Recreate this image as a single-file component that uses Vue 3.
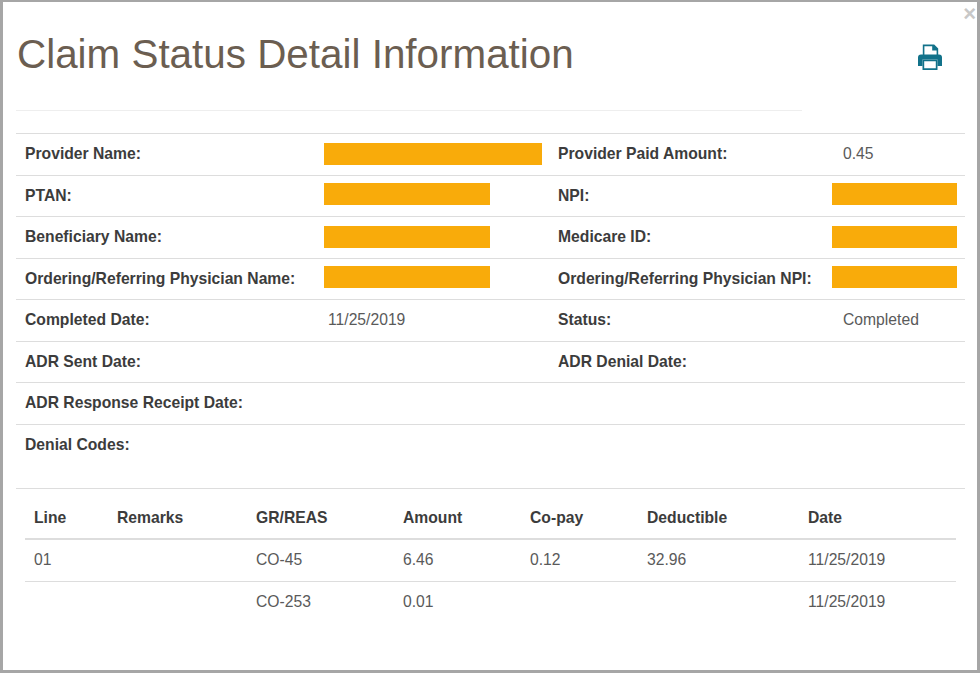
<template>
  <div class="modal">
    <span class="close">×</span>
    <div class="title-row">
      <h1 class="title">Claim Status Detail Information</h1>
      <svg class="print" viewBox="0 0 24 26" width="24" height="26">
        <path class="ink" fill-rule="evenodd" d="M4.800 11V.6h11.400l4 4V11h-1.600V6.400h-4.400V2.200H6.400V11z" />
        <path class="ink" d="M3 10.500h18a3 3 0 0 1 3 3V22h-4.500v-6.500h-15V22H0v-8.500a3 3 0 0 1 3-3z" />
        <path class="ink" fill-rule="evenodd" d="M4.500 15.500h15V26h-15zM6.200 17.200V24.300h11.600v-7.100z" />
      </svg>
    </div>
    <div class="title-rule"></div>

    <div class="info">
      <div v-for="row in rows" :key="row.label" class="info-row">
        <div class="label">{{ row.label }}</div>
        <div class="value">
          <span v-if="row.bar" class="bar" :style="{ width: row.bar + 'px' }"></span>
          <span v-else class="text">{{ row.value }}</span>
        </div>
        <div class="label">{{ row.label2 }}</div>
        <div class="value value-right">
          <span v-if="row.bar2" class="bar" :style="{ width: row.bar2 + 'px' }"></span>
          <span v-else class="text">{{ row.value2 }}</span>
        </div>
      </div>
    </div>

    <div class="lines-rule"></div>

    <table class="lines">
      <thead>
        <tr>
          <th v-for="col in columns" :key="col.name" :style="{ width: col.width + 'px' }">{{ col.name }}</th>
        </tr>
      </thead>
      <tbody>
        <tr v-for="(line, i) in lines" :key="i">
          <td v-for="(cell, j) in line" :key="j">{{ cell }}</td>
        </tr>
      </tbody>
    </table>
  </div>
</template>

<script setup>
const rows = [
  { label: 'Provider Name:', bar: 218, label2: 'Provider Paid Amount:', value2: '0.45' },
  { label: 'PTAN:', bar: 166, label2: 'NPI:', bar2: 125 },
  { label: 'Beneficiary Name:', bar: 166, label2: 'Medicare ID:', bar2: 125 },
  { label: 'Ordering/Referring Physician Name:', bar: 166, label2: 'Ordering/Referring Physician NPI:', bar2: 125 },
  { label: 'Completed Date:', value: '11/25/2019', label2: 'Status:', value2: 'Completed' },
  { label: 'ADR Sent Date:', label2: 'ADR Denial Date:' },
  { label: 'ADR Response Receipt Date:' },
  { label: 'Denial Codes:' },
]

const columns = [
  { name: 'Line', width: 83 },
  { name: 'Remarks', width: 139 },
  { name: 'GR/REAS', width: 147 },
  { name: 'Amount', width: 127 },
  { name: 'Co-pay', width: 117 },
  { name: 'Deductible', width: 161 },
  { name: 'Date', width: 157 },
]

const lines = [
  ['01', '', 'CO-45', '6.46', '0.12', '32.96', '11/25/2019'],
  ['', '', 'CO-253', '0.01', '', '', '11/25/2019'],
]
</script>

<style>
html,
body {
  margin: 0;
  background: #fff;
}
</style>

<style scoped>
.modal {
  position: relative;
  box-sizing: border-box;
  width: 980px;
  height: 673px;
  padding: 0 12px 0 13px;
  border: 3px solid #a6a6a6;
  border-top-width: 2px;
  background: #fff;
  font-family: "Liberation Sans", Arial, sans-serif;
  font-size: 15.7px;
  color: #5a5a5a;
}

.close {
  position: absolute;
  top: 1px;
  right: 1px;
  font-size: 22px;
  line-height: 22px;
  font-weight: 700;
  color: #c8c8c8;
}

.title-row {
  display: flex;
  justify-content: space-between;
  height: 108px;
  box-sizing: border-box;
  padding: 29px 0 0 1px;
}

.title {
  margin: 0;
  font-size: 40.4px;
  line-height: 46px;
  font-weight: 400;
  color: #6b5e51;
}

.print {
  margin: 13px 23px 0 0;
}

.print .ink {
  fill: #12728a;
}

.title-rule {
  width: 786px;
  border-top: 1px solid #eeeeee;
}

.info {
  margin-top: 22px;
  border-top: 1px solid #dddddd;
}

.info-row {
  display: grid;
  grid-template-columns: 308px 234px 274px 133px;
  align-items: center;
  box-sizing: border-box;
  height: 41.5px;
  border-bottom: 1px solid #dddddd;
}

.info-row:last-child {
  border-bottom: 0;
}

.label {
  padding-left: 9px;
  font-weight: 700;
  color: #3c3c3c;
  white-space: nowrap;
}

.info-row .label:nth-child(3) {
  padding-left: 0;
}

.value {
  display: flex;
  align-items: center;
}

.text {
  padding-left: 4px;
}

.value-right .text {
  padding-left: 11px;
}

.bar {
  display: block;
  height: 22px;
  background: #f9ab0a;
}

/* the even rows sit a little higher in the reference */
.info-row:nth-child(even) .bar {
  margin-bottom: 4px;
}

.lines-rule {
  margin-top: 22px;
  border-top: 1px solid #dddddd;
}

.lines {
  width: 931px;
  margin-left: 9px;
  border-collapse: collapse;
  table-layout: fixed;
}

.lines th,
.lines td {
  box-sizing: border-box;
  height: 42px;
  padding: 0 9px;
  text-align: left;
  white-space: nowrap;
}

.lines th {
  height: 50px;
  padding: 8px 9px 0;
  font-weight: 700;
  color: #3c3c3c;
  border-bottom: 2px solid #dddddd;
}

.lines tbody tr:first-child td {
  border-bottom: 1px solid #dddddd;
}
</style>
